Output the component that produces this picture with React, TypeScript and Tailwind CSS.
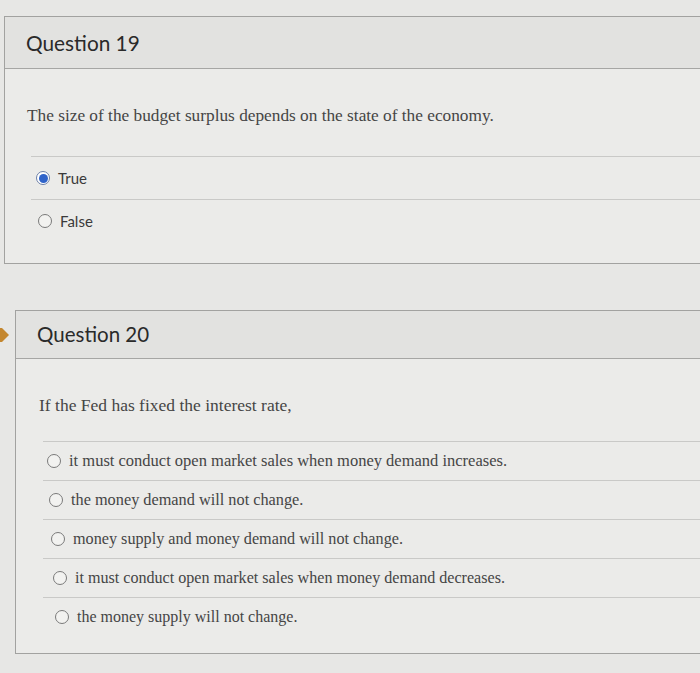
import React from "react";

const serif = { fontFamily: '"Liberation Serif", "Times New Roman", serif' };
const sans = { fontFamily: 'Lato, "Open Sans", sans-serif' };

function Radio({ checked }: { checked?: boolean }) {
  if (checked) {
    return (
      <span className="inline-flex h-[14px] w-[14px] shrink-0 items-center justify-center rounded-full border border-[#6b7fa8] bg-white">
        <span className="h-[9px] w-[9px] rounded-full bg-[#2f63c9]" />
      </span>
    );
  }
  return (
    <span className="inline-block h-[14px] w-[14px] shrink-0 rounded-full border border-[#7a7a7a] bg-[#f2f2f0]" />
  );
}

export default function App() {
  const q20 = [
    { t: "it must conduct open market sales when money demand increases.", pl: "pl-[4px]", fs: "text-[16.5px]" },
    { t: "the money demand will not change.", pl: "pl-[6px]", fs: "text-[16.3px]" },
    { t: "money supply and money demand will not change.", pl: "pl-[8px]", fs: "text-[16.2px]" },
    { t: "it must conduct open market sales when money demand decreases.", pl: "pl-[10px]", fs: "text-[16.1px]" },
    { t: "the money supply will not change.", pl: "pl-[12px]", fs: "text-[16px]" },
  ];
  return (
    <div className="h-[673px] w-[700px] overflow-hidden bg-[#e7e7e5] pt-[16px]">
      {/* Question 19 */}
      <div className="ml-[4px] w-[720px] border border-r-0 border-[#a2a2a0] bg-[#ebebe9]">
        <div className="flex h-[52px] items-center border-b border-[#a6a6a4] bg-[#e2e2e0] pl-[21px]">
          <span className="text-[20.8px] text-[#2a2a2a]" style={sans}>
            Question 19
          </span>
        </div>
        <div className="pl-[22px] pt-[37px] text-[17.3px] leading-[20px] text-[#454545]" style={serif}>
          The size of the budget surplus depends on the state of the economy.
        </div>
        <div className="ml-[26px] mt-[30px] pb-[21px]">
          <div className="flex h-[43px] items-center gap-[8px] border-t border-[#c9c9c7] pl-[5px]">
            <Radio checked />
            <span className="text-[15px] text-[#3a3a3a]" style={sans}>
              True
            </span>
          </div>
          <div className="flex h-[43px] items-center gap-[8px] border-t border-[#c9c9c7] pl-[7px]">
            <Radio />
            <span className="text-[15px] text-[#3a3a3a]" style={sans}>
              False
            </span>
          </div>
        </div>
      </div>

      {/* Question 20 */}
      <div className="relative mt-[46px]">
        <svg
          className="absolute left-0 top-[18px]"
          width="9"
          height="14"
          viewBox="0 0 9 14"
        >
          <path d="M0 0 L2 0 L9 7 L2 14 L0 14 Z" fill="#c4872f" />
        </svg>
        <div className="ml-[15px] w-[720px] border border-r-0 border-[#a2a2a0] bg-[#ebebe9]">
          <div className="flex h-[48px] items-center border-b border-[#a6a6a4] bg-[#e2e2e0] pl-[21px]">
            <span className="text-[20.5px] text-[#2a2a2a]" style={sans}>
              Question 20
            </span>
          </div>
          <div className="pl-[23px] pt-[36px] text-[17.5px] leading-[20px] text-[#454545]" style={serif}>
            If the Fed has fixed the interest rate,
          </div>
          <div className="ml-[27px] mt-[26px] pb-[17px]">
            {q20.map((o, i) => (
              <div
                key={i}
                className={`flex h-[39px] items-center gap-[8px] border-t border-[#c9c9c7] ${o.pl}`}
              >
                <Radio />
                <span className={`${o.fs} text-[#454545]`} style={serif}>
                  {o.t}
                </span>
              </div>
            ))}
          </div>
        </div>
      </div>
    </div>
  );
}
